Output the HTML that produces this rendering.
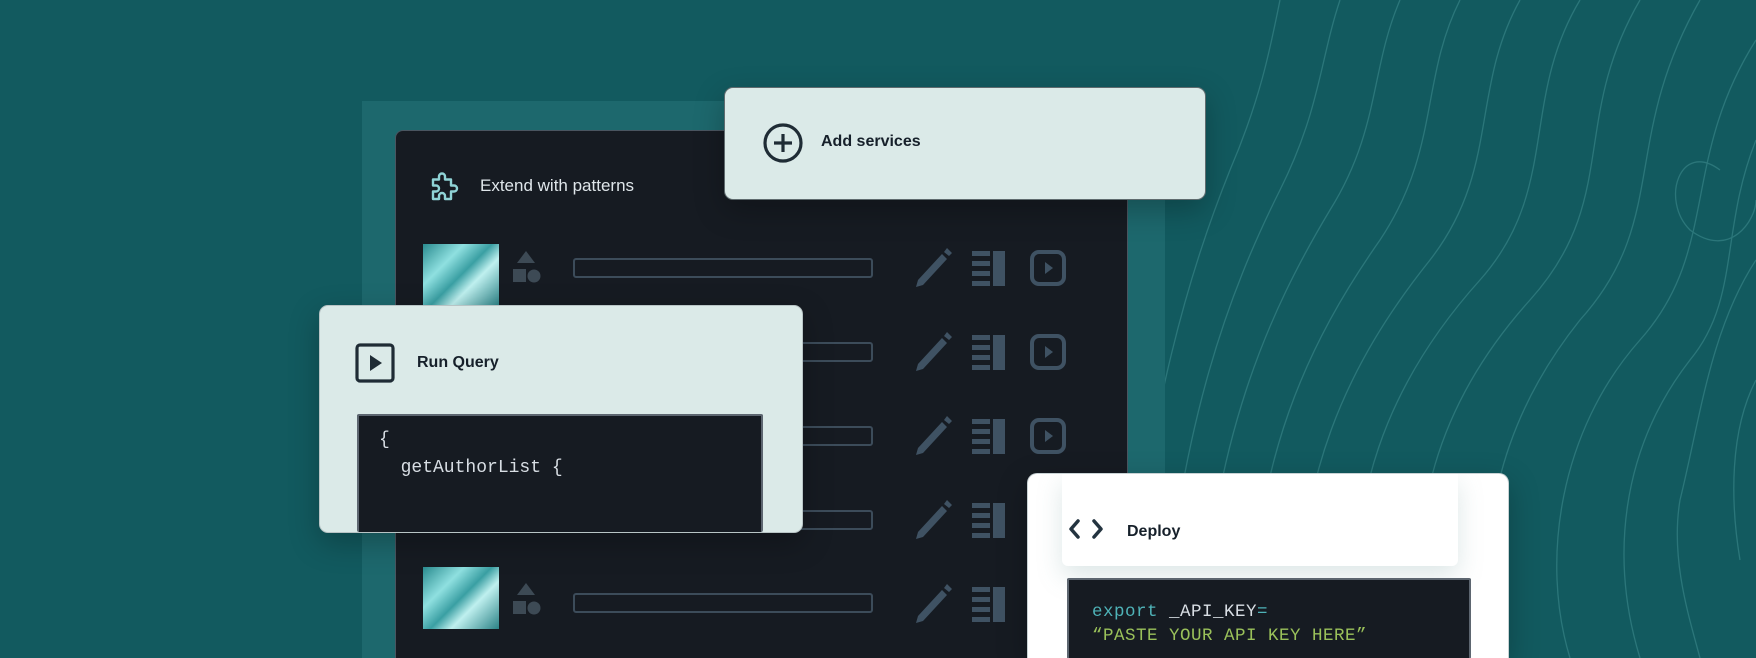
<!DOCTYPE html>
<html style="height:658px;overflow:hidden"><head><meta charset="utf-8"><style>
html,body{margin:0;width:1756px;height:658px;overflow:hidden}
body{background:#125a5f;font-family:"Liberation Sans",sans-serif;position:relative}
.a{position:absolute}
.row{position:absolute;left:0;width:100%;height:70px}
.thumb{position:absolute;left:28px;width:76px;height:62px;background:linear-gradient(135deg,#2a8c90,#8fe0e0 30%,#3a9fa3 50%,#bff0ef 65%,#2b8286)}
.bar{position:absolute;left:178px;width:296px;height:16px;border:2px solid #3c4c5a;border-radius:3px}
.mono{font-family:"Liberation Mono","DejaVu Sans Mono",monospace}
</style></head><body>
<svg class="a" style="left:1100px;top:0" width="656" height="658" fill="none" stroke="#3d8a8c" stroke-width="1.3" opacity=".6">
<path d="M540 0 C470 120 520 200 430 300 C340 400 300 520 330 658"/>
<path d="M600 0 C520 140 570 220 480 320 C400 420 370 540 400 658"/>
<path d="M656 40 C580 160 620 250 540 340 C460 430 440 560 470 658"/>
<path d="M656 140 C620 230 640 300 590 360 C520 450 510 560 540 658"/>
<path d="M656 260 C610 330 600 420 580 500 C570 560 590 620 600 658"/>
<path d="M480 0 C420 100 460 190 380 280 C290 380 240 500 260 658"/>
<path d="M420 0 C370 90 400 170 330 260 C250 360 190 480 200 658"/>
<path d="M360 0 C320 80 340 150 280 240 C210 340 150 460 150 658"/>
<path d="M300 0 C270 70 280 130 230 210 C170 310 110 440 100 658"/>
<path d="M240 0 C220 60 220 110 180 190 C130 290 80 420 60 658"/>
<path d="M180 0 C170 50 160 100 130 170 C90 270 50 400 20 658"/>
<path d="M656 380 C630 430 630 500 640 560"/>
<path d="M620 170 C580 140 560 200 590 230 C630 260 656 220 656 200"/>
</svg>
<div class="a" style="left:362px;top:101px;width:803px;height:557px;background:#1d686d"></div>
<div class="a" style="left:395px;top:130px;width:733px;height:528px;background:#161b22;border:1.5px solid #4a5560;border-bottom:none;border-radius:8px 8px 0 0;box-sizing:border-box">
 <svg class="a" style="left:31px;top:38px" width="36" height="36" viewBox="0 0 24 24" fill="none" stroke="#8fd3d6" stroke-width="1.6" stroke-linejoin="round"><path d="M4 7h4V5a2 2 0 014 0v2h4v4h2a2 2 0 010 4h-2v5h-4v-2a2 2 0 00-4 0v2H4v-5h2a2 2 0 000-4H4z"/></svg>
 <div class="a" style="left:84px;top:45px;color:#dfe6ea;font-size:17px">Extend with patterns</div>
</div>
<div class="a" style="left:395px;top:0;width:733px;height:658px;overflow:hidden">
 <div class="row" style="top:243px"><div class="thumb" style="top:1px"></div><svg class="a" style="left:116px;top:6px" width="30" height="36"><path d="M15 2 L24 14 H6Z" fill="#3d4a55"/><rect x="2" y="20" width="13" height="13" fill="#3d4a55"/><circle cx="23" cy="27" r="6.5" fill="#3d4a55"/></svg><div class="bar" style="top:15px"></div></div>
 <div class="row" style="top:327px"><div class="bar" style="top:15px"></div></div>
 <div class="row" style="top:411px"><div class="bar" style="top:15px"></div></div>
 <div class="row" style="top:495px"><div class="bar" style="top:15px"></div></div>
 <div class="row" style="top:567px;height:70px"><div class="thumb" style="top:0"></div><svg class="a" style="left:116px;top:14px" width="30" height="36"><path d="M15 2 L24 14 H6Z" fill="#3d4a55"/><rect x="2" y="20" width="13" height="13" fill="#3d4a55"/><circle cx="23" cy="27" r="6.5" fill="#3d4a55"/></svg><div class="bar" style="top:26px"></div></div>
</div>
<svg class="a" style="left:900px;top:230px" width="180" height="428">
 <g fill="#3f5263">
  <g id="r"><path d="M18 50 L42 24 L47 29 L23 55 L16 57Z M44 22 L47 18 L52 23 L49 26Z"/><rect x="72" y="21" width="18" height="5"/><rect x="72" y="31" width="18" height="5"/><rect x="72" y="41" width="18" height="5"/><rect x="72" y="51" width="18" height="5"/><rect x="93" y="21" width="12" height="35"/></g>
  <use href="#r" y="84"/><use href="#r" y="168"/><use href="#r" y="252"/><use href="#r" y="336"/>
 </g>
 <g fill="none" stroke="#3f5263" stroke-width="4">
  <rect x="132" y="22" width="32" height="32" rx="7"/><rect x="132" y="106" width="32" height="32" rx="7"/><rect x="132" y="190" width="32" height="32" rx="7"/>
 </g>
 <g fill="#3f5263"><path d="M145 32 L153 38 L145 44Z"/><path d="M145 116 L153 122 L145 128Z"/><path d="M145 200 L153 206 L145 212Z"/></g>
</svg>
<div class="a" style="left:724px;top:87px;width:480px;height:111px;background:#dbeae8;border:1.5px solid #5f6b6e;border-radius:9px;box-shadow:0 10px 30px rgba(0,0,0,.25)">
 <svg class="a" style="left:37px;top:34px" width="42" height="42"><circle cx="21" cy="21" r="18" fill="none" stroke="#1f2c35" stroke-width="3.2"/><path d="M21 12v18M12 21h18" stroke="#1f2c35" stroke-width="3.2"/></svg>
 <div class="a" style="left:96px;top:45px;font-size:16px;font-weight:bold;color:#16202a">Add services</div>
</div>
<div class="a" style="left:319px;top:305px;width:482px;height:226px;background:#dbeae8;border:1.5px solid #b8c4c5;border-radius:9px;overflow:hidden;box-shadow:0 10px 30px rgba(0,0,0,.25)">
 <svg class="a" style="left:35px;top:37px" width="40" height="40"><rect x="2" y="2" width="36" height="36" rx="3" fill="none" stroke="#1f2c35" stroke-width="3.2"/><path d="M15 12 L27 20 L15 28Z" fill="#1f2c35"/></svg>
 <div class="a" style="left:97px;top:48px;font-size:16px;font-weight:bold;color:#16202a">Run Query</div>
 <div class="a mono" style="left:37px;top:108px;width:406px;height:118px;background:#161b22;border:2px solid #5d6670;border-bottom:none;border-radius:2px;color:#d8dee4;font-size:18px;line-height:28px;padding:10px 0 0 20px;box-sizing:border-box">{<br>&nbsp;&nbsp;getAuthorList {</div>
</div>
<div class="a" style="left:1027px;top:473px;width:482px;height:185px;background:#fff;border:1.5px solid #c8d2d4;border-bottom:none;border-radius:10px 10px 0 0;overflow:hidden;box-sizing:border-box;box-shadow:0 10px 30px rgba(0,0,0,.25)">
 <div class="a" style="left:34px;top:0;width:396px;height:92px;background:#fff;box-shadow:0 10px 25px rgba(120,160,160,.25);border-radius:0 0 6px 6px"></div>
 <svg class="a" style="left:40px;top:43px" width="36" height="24" fill="none" stroke="#243440" stroke-width="3.5" stroke-linecap="round" stroke-linejoin="round"><path d="M10 4 L3 12 L10 20M26 4 L33 12 L26 20"/></svg>
 <div class="a" style="left:99px;top:49px;font-size:16px;font-weight:bold;color:#16202a">Deploy</div>
 <div class="a mono" style="left:39px;top:104px;width:404px;height:81px;background:#161b22;border:2px solid #5d6670;border-bottom:none;border-radius:2px;font-size:17.5px;line-height:24px;padding:20px 0 0 23px;box-sizing:border-box;color:#d8dee4;letter-spacing:.5px"><span style="color:#4fb3b8">export</span> _API_KEY<span style="color:#4fb3b8">=</span><br><span style="color:#9ac15a">“PASTE YOUR API KEY HERE”</span></div>
</div>
</body></html>
